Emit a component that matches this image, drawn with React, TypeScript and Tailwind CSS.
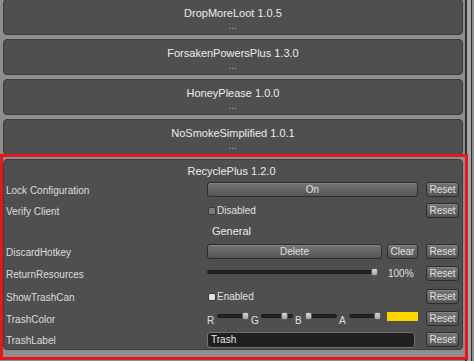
const mods = [
  "DropMoreLoot 1.0.5",
  "ForsakenPowersPlus 1.3.0",
  "HoneyPlease 1.0.0",
  "NoSmokeSimplified 1.0.1",
];

const btn =
  "h-[15px] flex items-center justify-center rounded-[3px] border border-[#2c2c2c] bg-gradient-to-b from-[#747474] to-[#555555] text-[10px] leading-none text-[#e2e2e2] shadow-[inset_0_1px_0_rgba(255,255,255,0.14)]";

const ModCard = ({ title }: { title: string }) => (
  <div className="h-[36px] shrink-0 rounded-[4px] border border-[#3d3d3d] bg-[#4f4f4f] flex flex-col items-center pt-[5px]">
    <div className="text-[11px] leading-[16px] text-[#ececec]">{title}</div>
    <div className="text-[10px] leading-[9px] text-[#bdbdbd]">...</div>
  </div>
);

const ResetBtn = () => <div className={`${btn} w-[33px] ml-[8px] shrink-0`}>Reset</div>;

const Row = ({
  label,
  h = "h-[21px]",
  children,
}: {
  label: string;
  h?: string;
  children: React.ReactNode;
}) => (
  <div className={`${h} flex items-center shrink-0`}>
    <div className="w-[203px] shrink-0 pl-[2px] pt-px text-[10px] text-[#dddddd]">{label}</div>
    <div className="flex-1 flex items-center min-w-0">{children}</div>
    <ResetBtn />
  </div>
);

const Slider = ({ width, value }: { width: number; value: number }) => (
  <div className="relative h-[8px] shrink-0 flex items-center" style={{ width }}>
    <div className="w-full h-[4px] rounded-full bg-[#252525] border border-[#1b1b1b]" />
    <div
      className="absolute top-0 w-[7px] h-[8px] rounded-[2px] bg-gradient-to-b from-[#d6d6d6] to-[#a6a6a6] border border-[#5a5a5a]"
      style={{ left: (width - 7) * value }}
    />
  </div>
);

const Check = ({ on, label }: { on: boolean; label: string }) => (
  <div className="flex items-center pl-[1px]">
    <div
      className={
        on
          ? "w-[8px] h-[8px] rounded-[2px] border border-[#3a3a3a] bg-[#e0e0e0]"
          : "w-[8px] h-[8px] rounded-[2px] border border-[#3a3a3a] bg-[#7a7a7a]"
      }
    />
    <span className="ml-[1px] text-[10px] text-[#e0e0e0]">{label}</span>
  </div>
);

const Channel = ({ letter, value }: { letter: string; value: number }) => (
  <div className="flex items-center mr-[2px]">
    <span className="w-[10px] mt-[4px] text-[10px] text-[#e0e0e0]">{letter}</span>
    <div className="mb-[5px]">
      <Slider width={32} value={value} />
    </div>
  </div>
);

export default function App() {
  return (
    <div className="relative w-[474px] h-[361px] overflow-hidden bg-[#8e8e8e] flex font-['Liberation_Sans',Arial,sans-serif]">
      <div className="w-[465px] shrink-0 flex flex-col gap-[4px] pl-[3px] pr-[2px] -mt-px">
        {mods.map((m) => (
          <ModCard key={m} title={m} />
        ))}

        <div className="h-[191px] shrink-0 rounded-[4px] border border-[#3d3d3d] bg-[#4f4f4f] flex flex-col pt-[3px] pr-[3px]">
          <div className="h-[16px] shrink-0 text-center text-[11px] leading-[16px] text-[#ececec]">
            RecyclePlus 1.2.0
          </div>
          <Row label="Lock Configuration">
            <div className={`${btn} w-full`}>On</div>
          </Row>
          <Row label="Verify Client">
            <Check on={false} label="Disabled" />
          </Row>
          <div className="h-[20px] shrink-0 flex items-center justify-center text-[11px] text-[#ececec]">
            General
          </div>
          <Row label="DiscardHotkey">
            <div className={`${btn} flex-1`}>Delete</div>
            <div className={`${btn} w-[31px] ml-[5px]`}>Clear</div>
          </Row>
          <Row label="ReturnResources" h="h-[23px]">
            <div className="mb-[4px]">
              <Slider width={171} value={1} />
            </div>
            <span className="ml-[10px] text-[10px] text-[#e0e0e0]">100%</span>
          </Row>
          <Row label="ShowTrashCan" h="h-[23px]">
            <Check on label="Enabled" />
          </Row>
          <Row label="TrashColor">
            <Channel letter="R" value={1} />
            <Channel letter="G" value={0.78} />
            <Channel letter="B" value={0} />
            <Channel letter="A" value={1} />
            <div className="ml-[4px] mb-[4px] w-[31px] h-[9px] bg-[#ffd500]" />
          </Row>
          <Row label="TrashLabel">
            <div className="w-[208px] h-[16px] rounded-[3px] border border-[#707070] bg-[#202020] pl-[3px] flex items-center text-[10px] text-[#e8e8e8]">
              Trash
            </div>
          </Row>
        </div>
      </div>

      <div className="flex shrink-0">
        <div className="w-[2px] bg-[#2e2e2e]" />
        <div className="w-[4px] bg-[#a6a6a6]" />
        <div className="w-[1px] bg-[#2e2e2e]" />
      </div>

      <div className="pointer-events-none absolute left-0 top-[154px] w-[468px] h-[206px] border-[3px] border-[#e2181e]" />
    </div>
  );
}
